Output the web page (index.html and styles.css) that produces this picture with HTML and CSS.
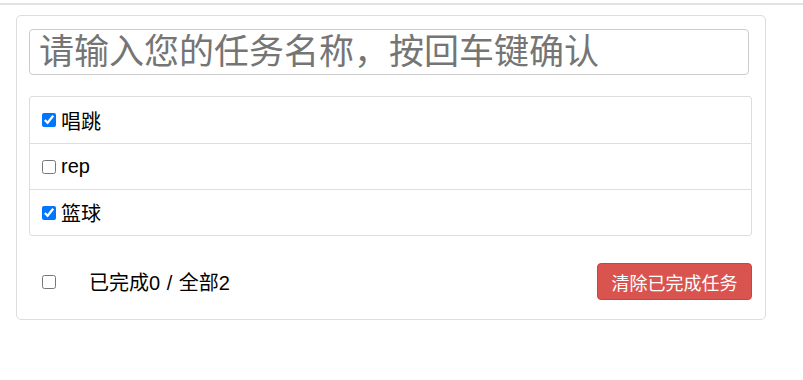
FILE: index.html
```html
<!DOCTYPE html>
<html lang="zh-CN">
<head>
<meta charset="utf-8">
<title>任务列表</title>
<link rel="stylesheet" href="styles.css">
</head>
<body>
<div class="topbar"></div>
<div class="card">
  <input class="task-input" type="text" placeholder="请输入您的任务名称，按回车键确认">
  <ul class="task-list">
    <li class="task-item"><label><input type="checkbox" checked><span>唱跳</span></label></li>
    <li class="task-item"><label><input type="checkbox"><span>rep</span></label></li>
    <li class="task-item"><label><input type="checkbox" checked><span>篮球</span></label></li>
  </ul>
  <div class="footer">
    <label class="footer-left"><input type="checkbox"><span class="count">已完成0 / 全部2</span></label>
    <button class="btn-danger" type="button">清除已完成任务</button>
  </div>
</div>
</body>
</html>
```

FILE: styles.css
```css
html, body {
  margin: 0;
  padding: 0;
  background: #fff;
}
body {
  font-family: "Liberation Sans", "Noto Sans CJK SC", sans-serif;
  color: #000;
}
.topbar {
  height: 2px;
  margin-top: 3px;
  background: #e2e2e2;
}
.card {
  box-sizing: border-box;
  width: 750px;
  margin: 10px 0 0 16px;
  padding: 13px 13px 19px 12px;
  border: 1px solid #dddddd;
  border-radius: 5px;
}
.task-input {
  box-sizing: border-box;
  display: block;
  width: 720px;
  height: 46px;
  margin: 0;
  padding: 0 9px;
  border: 1px solid #cccccc;
  border-radius: 4px;
  font-family: "Liberation Sans", "Noto Sans CJK SC", sans-serif;
  font-size: 35px;
  color: #555;
  outline: none;
}
.task-input::placeholder {
  color: #757575;
}
.task-list {
  list-style: none;
  margin: 21px 0 0 0;
  padding: 0;
  border: 1px solid #dddddd;
  border-radius: 3px;
}
.task-item {
  box-sizing: border-box;
  height: 46px;
  display: flex;
  align-items: center;
  padding-left: 8px;
  font-size: 20px;
  border-top: 1px solid #dddddd;
}
.task-item:first-child {
  border-top: none;
}
.task-item label {
  display: flex;
  align-items: center;
}
.task-item input,
.footer-left input {
  width: 14px;
  height: 14px;
  margin: 3px 5px 3px 4px;
}
.footer {
  display: flex;
  align-items: center;
  justify-content: space-between;
  margin-top: 27px;
}
.footer-left {
  display: flex;
  align-items: center;
  padding-left: 9px;
  font-size: 20px;
}
.count {
  margin-left: 28px;
  word-spacing: 1px;
}
.btn-danger {
  box-sizing: border-box;
  height: 37px;
  width: 155px;
  margin: 0;
  padding: 0 12px;
  background: #d9534f;
  border: 1px solid #d43f3a;
  border-radius: 4px;
  color: #fff;
  font-family: "Liberation Sans", "Noto Sans CJK SC", sans-serif;
  font-size: 18px;
  white-space: nowrap;
}
```
